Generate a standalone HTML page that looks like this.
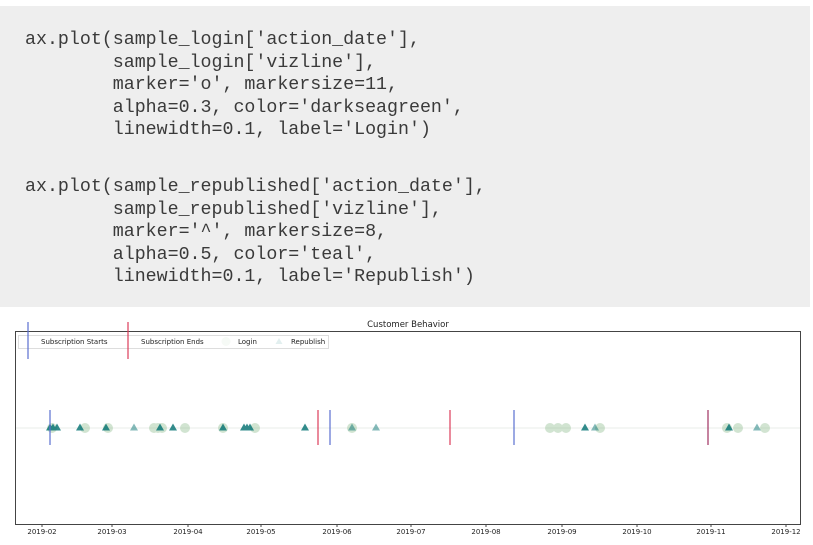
<!DOCTYPE html>
<html><head><style>
body{margin:0;width:813px;height:545px;background:#fff;overflow:hidden;position:relative;}
.code{position:absolute;left:0;top:6px;width:810px;height:301px;background:#eeeeee;}
pre{position:absolute;left:25px;margin:0;font-family:"Liberation Mono",monospace;font-size:18.3px;line-height:22.5px;color:#3a3a3a;}
svg{position:absolute;left:0;top:0}
</style></head><body>
<div class="code"></div>
<pre style="top:29px">ax.plot(sample_login['action_date'],
        sample_login['vizline'],
        marker='o', markersize=11,
        alpha=0.3, color='darkseagreen',
        linewidth=0.1, label='Login')</pre>
<pre style="top:176px">ax.plot(sample_republished['action_date'],
        sample_republished['vizline'],
        marker='^', markersize=8,
        alpha=0.5, color='teal',
        linewidth=0.1, label='Republish')</pre>
<svg width="813" height="545" font-family="DejaVu Sans, sans-serif">
<text x="408" y="327" font-size="8.5" text-anchor="middle" fill="#222">Customer Behavior</text>
<rect x="15.5" y="331.5" width="785" height="193" fill="none" stroke="#444" stroke-width="1"/>
<line x1="16" y1="428" x2="800" y2="428" stroke="#e8eee8" stroke-width="1"/>
<g fill="#8fbc8f" opacity="0.4">
<circle cx="52" cy="428" r="5"/><circle cx="85" cy="428" r="5"/><circle cx="108" cy="428" r="5"/><circle cx="154" cy="428" r="5"/><circle cx="158" cy="428" r="5"/><circle cx="162" cy="428" r="5"/><circle cx="185" cy="428" r="5"/><circle cx="223" cy="428" r="5"/><circle cx="255" cy="428" r="5"/><circle cx="352" cy="428" r="5"/><circle cx="550" cy="428" r="5"/><circle cx="558" cy="428" r="5"/><circle cx="566" cy="428" r="5"/><circle cx="600" cy="428" r="5"/><circle cx="727" cy="428" r="5"/><circle cx="738" cy="428" r="5"/><circle cx="765" cy="428" r="5"/>
<circle cx="226" cy="341.5" r="4.5"/>
</g>
<g fill="#007070" opacity="0.8">
<path d="M50 423.5l4 7h-8z"/><path d="M53 423.5l4 7h-8z"/><path d="M57 423.5l4 7h-8z"/><path d="M80 423.5l4 7h-8z"/><path d="M106 423.5l4 7h-8z"/><path d="M134 423.5l4 7h-8z" opacity=".6"/><path d="M160 423.5l4 7h-8z"/><path d="M173 423.5l4 7h-8z"/><path d="M223 423.5l4 7h-8z"/><path d="M244 423.5l4 7h-8z"/><path d="M247 423.5l4 7h-8z"/><path d="M250 423.5l4 7h-8z"/><path d="M305 423.5l4 7h-8z"/><path d="M352 423.5l4 7h-8z" opacity=".6"/><path d="M376 423.5l4 7h-8z" opacity=".6"/><path d="M585 423.5l4 7h-8z"/><path d="M595 423.5l4 7h-8z" opacity=".6"/><path d="M729 423.5l4 7h-8z"/><path d="M757 423.5l4 7h-8z" opacity=".6"/>
<path d="M279 338l3.5 6h-7z" opacity=".7"/>
</g>
<g stroke-width="1.2">
<line x1="50" y1="410" x2="50" y2="445" stroke="#5a6fd0"/>
<line x1="330" y1="410" x2="330" y2="445" stroke="#5a6fd0"/>
<line x1="514" y1="410" x2="514" y2="445" stroke="#5a6fd0"/>
<line x1="318" y1="410" x2="318" y2="445" stroke="#dc3c5a"/>
<line x1="450" y1="410" x2="450" y2="445" stroke="#dc3c5a"/>
<line x1="708" y1="410" x2="708" y2="445" stroke="#a03060"/>
</g>
<rect x="18.5" y="335.5" width="310" height="13" fill="#fff" fill-opacity="0.8" stroke="#ddd"/>
<line x1="28" y1="322" x2="28" y2="359" stroke="#5a6fd0" stroke-width="1.2"/>
<line x1="128" y1="322" x2="128" y2="359" stroke="#dc3c5a" stroke-width="1.2"/>
<g font-size="7" fill="#222">
<text x="41" y="344">Subscription Starts</text>
<text x="141" y="344">Subscription Ends</text>
<text x="238" y="344">Login</text>
<text x="291" y="344">Republish</text>
</g>
<g font-size="7" fill="#222" text-anchor="middle" stroke="#444">
<line x1="42" y1="524" x2="42" y2="527"/><text x="42" y="534" stroke="none">2019-02</text>
<line x1="112" y1="524" x2="112" y2="527"/><text x="112" y="534" stroke="none">2019-03</text>
<line x1="188" y1="524" x2="188" y2="527"/><text x="188" y="534" stroke="none">2019-04</text>
<line x1="261" y1="524" x2="261" y2="527"/><text x="261" y="534" stroke="none">2019-05</text>
<line x1="337" y1="524" x2="337" y2="527"/><text x="337" y="534" stroke="none">2019-06</text>
<line x1="411" y1="524" x2="411" y2="527"/><text x="411" y="534" stroke="none">2019-07</text>
<line x1="486" y1="524" x2="486" y2="527"/><text x="486" y="534" stroke="none">2019-08</text>
<line x1="562" y1="524" x2="562" y2="527"/><text x="562" y="534" stroke="none">2019-09</text>
<line x1="637" y1="524" x2="637" y2="527"/><text x="637" y="534" stroke="none">2019-10</text>
<line x1="711" y1="524" x2="711" y2="527"/><text x="711" y="534" stroke="none">2019-11</text>
<line x1="786" y1="524" x2="786" y2="527"/><text x="786" y="534" stroke="none">2019-12</text>
</g>
</svg>
</body></html>
